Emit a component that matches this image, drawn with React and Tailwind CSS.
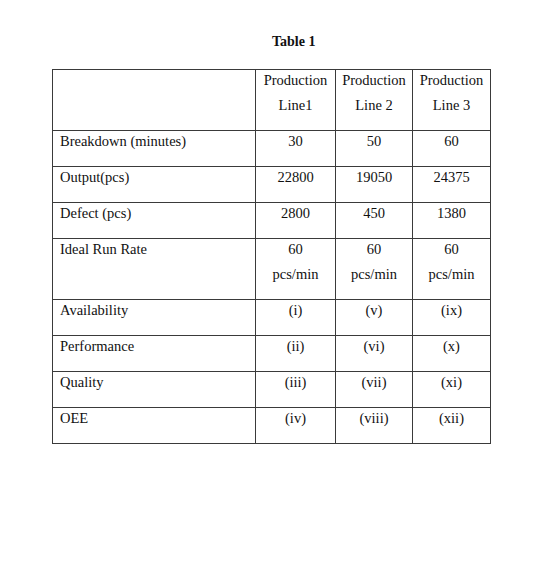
const rows = [
  { label: "Breakdown (minutes)", values: ["30", "50", "60"] },
  { label: "Output(pcs)", values: ["22800", "19050", "24375"] },
  { label: "Defect (pcs)", values: ["2800", "450", "1380"] },
  { label: "Ideal Run Rate", values: [["60", "pcs/min"], ["60", "pcs/min"], ["60", "pcs/min"]], tall: true },
  { label: "Availability", values: ["(i)", "(v)", "(ix)"] },
  { label: "Performance", values: ["(ii)", "(vi)", "(x)"] },
  { label: "Quality", values: ["(iii)", "(vii)", "(xi)"] },
  { label: "OEE", values: ["(iv)", "(viii)", "(xii)"] },
];

function Cell({ lines, tall, left }) {
  const list = Array.isArray(lines) ? lines : [lines];
  return (
    <td
      className={`border border-[#3a3a3a] p-0 align-top ${tall ? "h-[61px]" : "h-[36px]"} ${
        left ? "text-left pl-[7px]" : "text-center"
      }`}
    >
      <div className="-mt-[2px] leading-[25px]">
        {list.map((l, i) => (
          <div key={i}>{l}</div>
        ))}
      </div>
    </td>
  );
}

export default function App() {
  return (
    <div className="w-[555px] h-[564px] bg-white text-[#111] font-['Liberation_Serif',serif]">
      <div className="pt-[32px] pl-[272px] text-[14px] leading-[20px] font-bold">Table 1</div>
      <div className="pl-[52px] pt-[17px]">
        <table className="border-collapse text-[14.5px] table-fixed w-[438px]">
          <colgroup>
            <col className="w-[203px]" />
            <col className="w-[80px]" />
            <col className="w-[77px]" />
            <col className="w-[78px]" />
          </colgroup>
          <tbody>
            <tr>
              <Cell lines="" tall />
              <Cell lines={["Production", "Line1"]} tall />
              <Cell lines={["Production", "Line 2"]} tall />
              <Cell lines={["Production", "Line 3"]} tall />
            </tr>
            {rows.map((r) => (
              <tr key={r.label}>
                <Cell lines={r.label} left tall={r.tall} />
                {r.values.map((v, i) => (
                  <Cell key={i} lines={v} tall={r.tall} />
                ))}
              </tr>
            ))}
          </tbody>
        </table>
      </div>
    </div>
  );
}
